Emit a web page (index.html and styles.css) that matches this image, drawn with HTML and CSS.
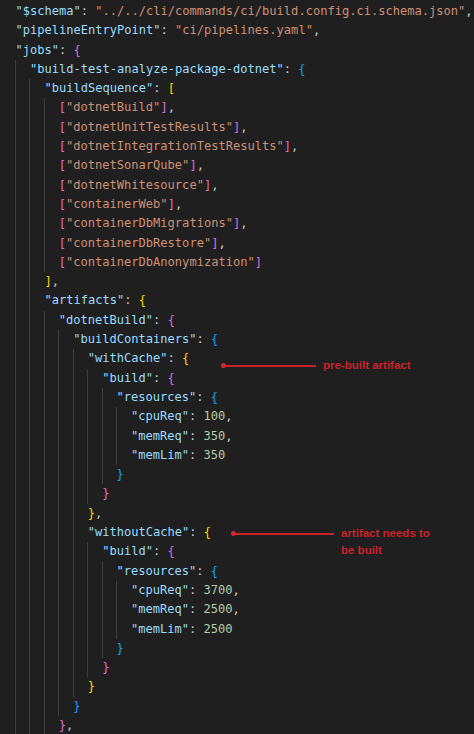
FILE: index.html
```html
<!DOCTYPE html>
<html>
<head>
<meta charset="utf-8">
<link rel="stylesheet" href="styles.css">
</head>
<body>
<div class="editor">
  <div class="ln"><span class="k">"$schema"</span><span class="p">: </span><span class="s">"../../cli/commands/ci/build.config.ci.schema.json"</span><span class="p">,</span></div>
  <div class="ln"><span class="k">"pipelineEntryPoint"</span><span class="p">: </span><span class="s">"ci/pipelines.yaml"</span><span class="p">,</span></div>
  <div class="ln"><span class="k">"jobs"</span><span class="p">: </span><span class="bp">{</span></div>
  <div class="ln"><i></i><span class="k">"build-test-analyze-package-dotnet"</span><span class="p">: </span><span class="bb">{</span></div>
  <div class="ln"><i></i><i></i><span class="k">"buildSequence"</span><span class="p">: </span><span class="bg">[</span></div>
  <div class="ln"><i></i><i></i><i></i><span class="bp">[</span><span class="s">"dotnetBuild"</span><span class="bp">]</span><span class="p">,</span></div>
  <div class="ln"><i></i><i></i><i></i><span class="bp">[</span><span class="s">"dotnetUnitTestResults"</span><span class="bp">]</span><span class="p">,</span></div>
  <div class="ln"><i></i><i></i><i></i><span class="bp">[</span><span class="s">"dotnetIntegrationTestResults"</span><span class="bp">]</span><span class="p">,</span></div>
  <div class="ln"><i></i><i></i><i></i><span class="bp">[</span><span class="s">"dotnetSonarQube"</span><span class="bp">]</span><span class="p">,</span></div>
  <div class="ln"><i></i><i></i><i></i><span class="bp">[</span><span class="s">"dotnetWhitesource"</span><span class="bp">]</span><span class="p">,</span></div>
  <div class="ln"><i></i><i></i><i></i><span class="bp">[</span><span class="s">"containerWeb"</span><span class="bp">]</span><span class="p">,</span></div>
  <div class="ln"><i></i><i></i><i></i><span class="bp">[</span><span class="s">"containerDbMigrations"</span><span class="bp">]</span><span class="p">,</span></div>
  <div class="ln"><i></i><i></i><i></i><span class="bp">[</span><span class="s">"containerDbRestore"</span><span class="bp">]</span><span class="p">,</span></div>
  <div class="ln"><i></i><i></i><i></i><span class="bp">[</span><span class="s">"containerDbAnonymization"</span><span class="bp">]</span></div>
  <div class="ln"><i></i><i></i><span class="bg">]</span><span class="p">,</span></div>
  <div class="ln"><i></i><i></i><span class="k">"artifacts"</span><span class="p">: </span><span class="bg">{</span></div>
  <div class="ln"><i></i><i></i><i></i><span class="k">"dotnetBuild"</span><span class="p">: </span><span class="bp">{</span></div>
  <div class="ln"><i></i><i></i><i></i><i></i><span class="k">"buildContainers"</span><span class="p">: </span><span class="bb">{</span></div>
  <div class="ln"><i></i><i></i><i></i><i></i><i></i><span class="k">"withCache"</span><span class="p">: </span><span class="bg">{</span></div>
  <div class="ln"><i></i><i></i><i></i><i></i><i></i><i></i><span class="k">"build"</span><span class="p">: </span><span class="bp">{</span></div>
  <div class="ln"><i></i><i></i><i></i><i></i><i></i><i></i><i></i><span class="k">"resources"</span><span class="p">: </span><span class="bb">{</span></div>
  <div class="ln"><i></i><i></i><i></i><i></i><i></i><i></i><i></i><i></i><span class="k">"cpuReq"</span><span class="p">: </span><span class="n">100</span><span class="p">,</span></div>
  <div class="ln"><i></i><i></i><i></i><i></i><i></i><i></i><i></i><i></i><span class="k">"memReq"</span><span class="p">: </span><span class="n">350</span><span class="p">,</span></div>
  <div class="ln"><i></i><i></i><i></i><i></i><i></i><i></i><i></i><i></i><span class="k">"memLim"</span><span class="p">: </span><span class="n">350</span></div>
  <div class="ln"><i></i><i></i><i></i><i></i><i></i><i></i><i></i><span class="bb">}</span></div>
  <div class="ln"><i></i><i></i><i></i><i></i><i></i><i></i><span class="bp">}</span></div>
  <div class="ln"><i></i><i></i><i></i><i></i><i></i><span class="bg">}</span><span class="p">,</span></div>
  <div class="ln"><i></i><i></i><i></i><i></i><i></i><span class="k">"withoutCache"</span><span class="p">: </span><span class="bg">{</span></div>
  <div class="ln"><i></i><i></i><i></i><i></i><i></i><i></i><span class="k">"build"</span><span class="p">: </span><span class="bp">{</span></div>
  <div class="ln"><i></i><i></i><i></i><i></i><i></i><i></i><i></i><span class="k">"resources"</span><span class="p">: </span><span class="bb">{</span></div>
  <div class="ln"><i></i><i></i><i></i><i></i><i></i><i></i><i></i><i></i><span class="k">"cpuReq"</span><span class="p">: </span><span class="n">3700</span><span class="p">,</span></div>
  <div class="ln"><i></i><i></i><i></i><i></i><i></i><i></i><i></i><i></i><span class="k">"memReq"</span><span class="p">: </span><span class="n">2500</span><span class="p">,</span></div>
  <div class="ln"><i></i><i></i><i></i><i></i><i></i><i></i><i></i><i></i><span class="k">"memLim"</span><span class="p">: </span><span class="n">2500</span></div>
  <div class="ln"><i></i><i></i><i></i><i></i><i></i><i></i><i></i><span class="bb">}</span></div>
  <div class="ln"><i></i><i></i><i></i><i></i><i></i><i></i><span class="bp">}</span></div>
  <div class="ln"><i></i><i></i><i></i><i></i><i></i><span class="bg">}</span></div>
  <div class="ln"><i></i><i></i><i></i><i></i><span class="bb">}</span></div>
  <div class="ln"><i></i><i></i><i></i><span class="bp">}</span><span class="p">,</span></div>

  <div class="note note-1">
    <span class="arrow arrow-1"></span>
    <span class="label">pre-built artifact</span>
  </div>
  <div class="note note-2">
    <span class="arrow arrow-2"></span>
    <span class="label">artifact needs to<br>be built</span>
  </div>
</div>
</body>
</html>
```
FILE: styles.css
```css
html, body {
  margin: 0;
  padding: 0;
  background: #1f1f1f;
}
.editor {
  position: relative;
  width: 474px;
  height: 734px;
  overflow: hidden;
  box-sizing: border-box;
  padding: 2px 0 0 15.5px;
  background: #1f1f1f;
  font-family: "DejaVu Sans Mono", "Liberation Mono", monospace;
  font-size: 12.05px;
  color: #cccccc;
}
.ln {
  display: flex;
  height: 19.3px;
  line-height: 19.3px;
  white-space: pre;
}
.ln i {
  flex: 0 0 auto;
  width: 14.44px;
  box-sizing: border-box;
  border-left: 1px solid #3e3e3e;
  margin-left: -0.5px;
  margin-right: 0.5px;
}
.k { color: #9cdcfe; }
.s { color: #ce9178; }
.n { color: #b5cea8; }
.p { color: #cccccc; }
.bg { color: #ffd700; }
.bp { color: #da70d6; }
.bb { color: #179fff; }

.note {
  position: absolute;
  display: flex;
  align-items: flex-start;
  font-family: "Liberation Sans", Arial, sans-serif;
  font-weight: bold;
  font-size: 11.5px;
  line-height: 17px;
  color: #c8232c;
}
.note-1 { left: 222px; top: 357px; }
.note-2 { left: 232px; top: 525px; }
.arrow {
  position: relative;
  height: 1.5px;
  background: #c8232c;
  margin-top: 8px;
  margin-right: 7px;
}
.arrow::before {
  content: "";
  position: absolute;
  left: -1px;
  top: -1.75px;
  width: 5px;
  height: 5px;
  border-radius: 50%;
  background: #d8262f;
}
.arrow-1 { width: 94px; }
.arrow-2 { width: 102px; }
```
